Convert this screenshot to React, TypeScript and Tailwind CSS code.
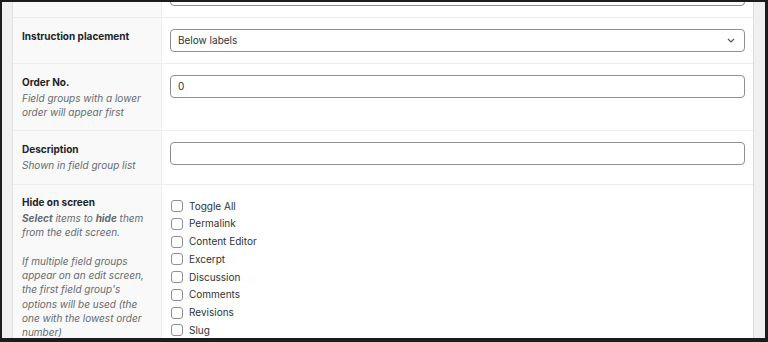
import React from 'react';

const font = { fontFamily: 'Inter, "Noto Sans", sans-serif' };

const hideItems = [
  'Toggle All',
  'Permalink',
  'Content Editor',
  'Excerpt',
  'Discussion',
  'Comments',
  'Revisions',
  'Slug',
];

function Row({
  label,
  children,
  className = '',
}: {
  label: React.ReactNode;
  children: React.ReactNode;
  className?: string;
}) {
  return (
    <div className={`flex border-t border-[#ededed] ${className}`}>
      <div className="w-[149px] shrink-0 bg-[#f9f9f9] border-r border-[#ededed] pl-[9px] pr-[6px]">
        {label}
      </div>
      <div className="flex-1 pl-[8px] pr-[8px]">{children}</div>
    </div>
  );
}

function TextInput({ value = '' }: { value?: string }) {
  return (
    <div className="h-[23px] rounded-[4px] border border-[#8c8f94] bg-white flex items-center px-[7px] text-[10px] text-[#2c3338]">
      {value}
    </div>
  );
}

export default function App() {
  return (
    <div
      className="w-[768px] h-[342px] bg-[#1c1c1c] pt-[2px] pl-[2px] pr-[3px] pb-[4px] overflow-hidden"
      style={font}
    >
      <div className="flex h-full">
        {/* left gutter */}
        <div className="w-[11px] shrink-0 bg-[#f0f0f1] border-r border-[#e2e2e2]" />

        <div className="flex-1 bg-white flex flex-col overflow-hidden">
          {/* clipped row at the top */}
          <div className="flex h-[15px] shrink-0 overflow-hidden">
            <div className="w-[149px] shrink-0 bg-[#f9f9f9] border-r border-[#ededed]" />
            <div className="flex-1 px-[8px] flex flex-col justify-end pb-[11px]">
              <div className="h-[23px] shrink-0 rounded-[4px] border border-[#8c8f94]" />
            </div>
          </div>

          <Row
            className="h-[46px] shrink-0"
            label={
              <div className="pt-[11px] text-[10px] font-bold text-[#1d2327] leading-[14px]">
                Instruction placement
              </div>
            }
          >
            <div className="pt-[11px]">
              <div className="h-[23px] rounded-[4px] border border-[#8c8f94] bg-white flex items-center justify-between pl-[7px] pr-[9px] text-[10px] text-[#2c3338]">
                <span>Below labels</span>
                <svg width="8" height="5" viewBox="0 0 8 5" fill="none">
                  <path d="M1 1 4 4 7 1" stroke="#50575e" strokeWidth="1.2" />
                </svg>
              </div>
            </div>
          </Row>

          <Row
            className="h-[67px] shrink-0"
            label={
              <div className="pt-[11px] leading-[14px]">
                <div className="text-[10px] font-bold text-[#1d2327]">Order No.</div>
                <div className="mt-[2px] text-[10px] italic text-[#646970]">
                  Field groups with a lower order will appear first
                </div>
              </div>
            }
          >
            <div className="pt-[11px]">
              <TextInput value="0" />
            </div>
          </Row>

          <Row
            className="h-[54px] shrink-0"
            label={
              <div className="pt-[11px] leading-[14px]">
                <div className="text-[10px] font-bold text-[#1d2327]">Description</div>
                <div className="mt-[2px] text-[10px] italic text-[#646970]">
                  Shown in field group list
                </div>
              </div>
            }
          >
            <div className="pt-[11px]">
              <TextInput />
            </div>
          </Row>

          <Row
            className="flex-1"
            label={
              <div className="pt-[10px] leading-[14.3px] text-[10px]">
                <div className="font-bold text-[#1d2327]">Hide on screen</div>
                <div className="mt-[1.5px] italic text-[#646970]">
                  <p>
                    <span className="font-bold">Select</span> items to{' '}
                    <span className="font-bold">hide</span> them from the edit screen.
                  </p>
                  <p className="mt-[14.3px]">
                    If multiple field groups appear on an edit screen, the first field
                    group's options will be used (the one with the lowest order number)
                  </p>
                </div>
              </div>
            }
          >
            <ul className="pt-[15px] flex flex-col gap-[5.75px]">
              {hideItems.map((item) => (
                <li key={item} className="flex items-center h-[12px] text-[10px] text-[#2c3338]">
                  <span className="w-[12px] h-[12px] shrink-0 rounded-[3px] border border-[#8c8f94] bg-white ml-[1px]" />
                  <span className="ml-[6px]">{item}</span>
                </li>
              ))}
            </ul>
          </Row>
        </div>

        {/* right scroll gutter */}
        <div className="w-[12px] shrink-0 bg-[#f0f0f1] border-l border-[#dcdcde]" />
      </div>
    </div>
  );
}
